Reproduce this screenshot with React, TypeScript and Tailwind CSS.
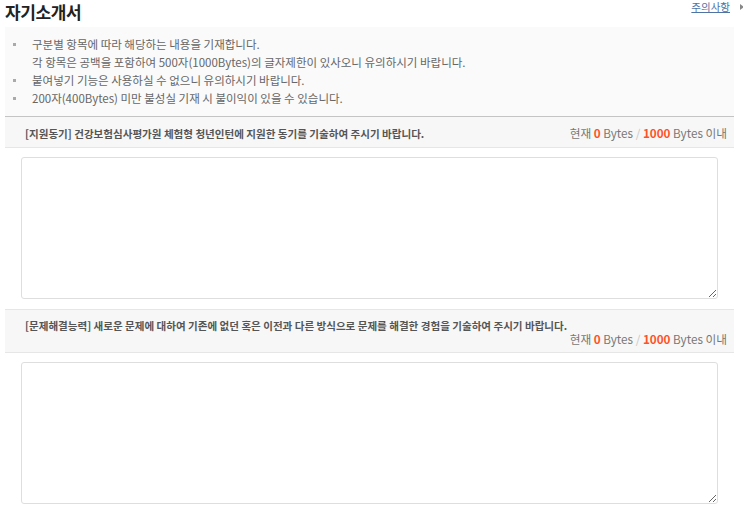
import React from "react";

const FONT = { fontFamily: '"Noto Sans CJK KR", "Noto Sans", sans-serif' };

function ByteCounter() {
  return (
    <span className="ml-auto whitespace-nowrap pl-[16px] text-[11.7px] font-normal text-[#777]">
      현재 <b className="font-bold text-[#ff5227]">0</b> Bytes{" "}
      <span className="text-[#c8c8c8]">/</span>{" "}
      <b className="font-bold text-[#ff5227]">1000</b> Bytes 이내
    </span>
  );
}

function Question({ title, first = false }: { title: string; first?: boolean }) {
  return (
    <section className={first ? "" : "mt-[10px]"}>
      <div
        className={
          "mx-[5px] flex w-[729px] flex-wrap items-baseline bg-[#f7f7f7] pb-[7px] pl-[20px] pr-[7px] pt-[9px] leading-[13px] border-b border-[#e6e6e6] " +
          (first ? "" : "border-t")
        }
      >
        <strong className="text-[10.55px] font-bold text-[#555]">{title}</strong>
        <ByteCounter />
      </div>
      <div className="pl-[21px] pt-[9px]">
        <textarea className="block h-[142px] w-[697px] rounded-[3px] border border-[#dedede] bg-white outline-none" />
      </div>
    </section>
  );
}

const notices = [
  { bullet: true, text: "구분별 항목에 따라 해당하는 내용을 기재합니다." },
  {
    bullet: false,
    text: "각 항목은 공백을 포함하여 500자(1000Bytes)의 글자제한이 있사오니 유의하시기 바랍니다.",
  },
  { bullet: true, text: "붙여넣기 기능은 사용하실 수 없으니 유의하시기 바랍니다." },
  { bullet: true, text: "200자(400Bytes) 미만 불성실 기재 시 불이익이 있을 수 있습니다." },
];

export default function App() {
  return (
    <div className="h-[505px] w-[743px] overflow-hidden bg-white" style={FONT}>
      <div className="flex h-[27px] items-start justify-between pl-[5px]">
        <h2 className="text-[17px] font-bold leading-[24px] tracking-[-0.4px] text-[#222]">
          자기소개서
        </h2>
        <div className="flex items-center gap-[10px] pt-[1px] text-[10.5px] leading-[12px]">
          <a className="text-[#4f73a3] underline">주의사항</a>
          <span className="mr-[-1px] block h-0 w-0 border-y-[3px] border-l-[4px] border-y-transparent border-l-[#888]" />
        </div>
      </div>

      <ul className="mx-[5px] w-[729px] border-b border-[#c4c4c4] bg-[#fafafa] pb-[9px] pl-[8px] pt-[8px] text-[11.5px] leading-[18px] text-[#666]">
        {notices.map((n) => (
          <li key={n.text} className="flex items-center">
            <span className="flex w-[19px] shrink-0 items-center">
              {n.bullet ? <span className="block h-[3px] w-[3px] bg-[#aaa]" /> : null}
            </span>
            <span>{n.text}</span>
          </li>
        ))}
      </ul>

      <Question first title="[지원동기] 건강보험심사평가원 체험형 청년인턴에 지원한 동기를 기술하여 주시기 바랍니다." />
      <Question title="[문제해결능력] 새로운 문제에 대하여 기존에 없던 혹은 이전과 다른 방식으로 문제를 해결한 경험을 기술하여 주시기 바랍니다." />
    </div>
  );
}
